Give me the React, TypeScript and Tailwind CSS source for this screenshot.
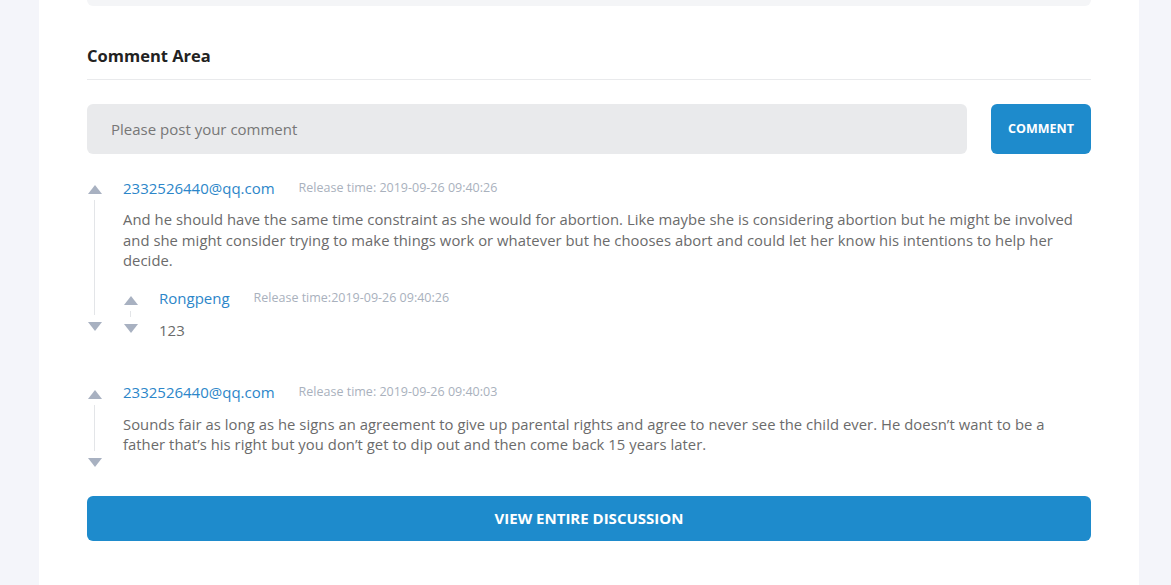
import React from "react";

type Reply = { user: string; time: string; text: string };
type Comment = { user: string; time: string; text: string; lineH: string; replies?: Reply[] };

const comments: Comment[] = [
  {
    user: "2332526440@qq.com",
    time: "Release time: 2019-09-26 09:40:26",
    text:
      "And he should have the same time constraint as she would for abortion. Like maybe she is considering abortion but he might be involved and she might consider trying to make things work or whatever but he chooses abort and could let her know his intentions to help her decide.",
    lineH: "h-[115px]",
    replies: [{ user: "Rongpeng", time: "Release time:2019-09-26 09:40:26", text: "123" }],
  },
  {
    user: "2332526440@qq.com",
    time: "Release time: 2019-09-26 09:40:03",
    text:
      "Sounds fair as long as he signs an agreement to give up parental rights and agree to never see the child ever. He doesn’t want to be a father that’s his right but you don’t get to dip out and then come back 15 years later.",
    lineH: "h-[46px]",
  },
];

function Arrow({ down }: { down?: boolean }) {
  return (
    <svg width="14" height="9" viewBox="0 0 14 9" className="block shrink-0">
      <polygon points={down ? "0,0 14,0 7,9" : "7,0 14,9 0,9"} fill="#a8b1c1" />
    </svg>
  );
}

// colonne des votes (flèche haut, trait, flèche bas)
function Votes({ lineH }: { lineH: string }) {
  return (
    <div className="w-[36px] shrink-0 flex flex-col items-start pt-[7px]">
      <div className="flex flex-col items-center w-[15px]">
        <Arrow />
        <div className={`w-px bg-[#e3e5e8] mt-[6px] mb-[7px] ${lineH}`} />
        <Arrow down />
      </div>
    </div>
  );
}

function Meta({ user, time }: { user: string; time: string }) {
  return (
    <div className="flex items-center gap-6 h-[20px]">
      <span className="text-[15px] text-[#2c86c9] font-medium">{user}</span>
      <span className="text-[12.5px] text-[#a9b1bd]">{time}</span>
    </div>
  );
}

export default function App() {
  return (
    <div
      className="min-h-[585px] bg-[#f4f5fa] pl-[39px] pr-[32px]"
      style={{ fontFamily: '"Open Sans", "Liberation Sans", sans-serif' }}
    >
      <div className="bg-white min-h-[585px] px-[48px]">
        <div className="h-[6px] bg-[#f4f5f7] rounded-b-lg" />

        <h2 className="mt-[38px] text-[16.5px] leading-[24px] font-bold text-[#222]">Comment Area</h2>
        <div className="mt-[11px] h-px bg-[#e9eaec]" />

        <div className="mt-[24px] flex gap-6">
          <div className="flex-1 h-[50px] rounded-md bg-[#e9eaec] flex items-center px-6 text-[15px] text-[#777]">
            Please post your comment
          </div>
          <button className="w-[100px] h-[50px] rounded-md bg-[#1e8bcc] text-white text-[12.5px] font-bold">
            COMMENT
          </button>
        </div>

        <div className="mt-[24px]">
          {comments.map((c, i) => (
            <div key={i} className={`flex ${i > 0 ? "mt-[43px]" : ""}`}>
              <Votes lineH={c.lineH} />
              <div className="flex-1">
                <Meta user={c.user} time={c.time} />
                <p className="mt-[11px] max-w-[962px] text-[14.8px] leading-[20.5px] tracking-[0.05px] text-[#6b6b6b]">
                  {c.text}
                </p>
                {c.replies?.map((r, j) => (
                  <div key={j} className="flex mt-[18px]">
                    <Votes lineH="h-[6px]" />
                    <div className="flex-1">
                      <Meta user={r.user} time={r.time} />
                      <p className="mt-[11px] text-[15px] leading-[20px] text-[#6b6b6b]">{r.text}</p>
                    </div>
                  </div>
                ))}
              </div>
            </div>
          ))}
        </div>

        <button className="mt-[29px] w-full h-[45px] rounded-md bg-[#1e8bcc] text-white text-[15px] font-bold">
          VIEW ENTIRE DISCUSSION
        </button>
      </div>
    </div>
  );
}
